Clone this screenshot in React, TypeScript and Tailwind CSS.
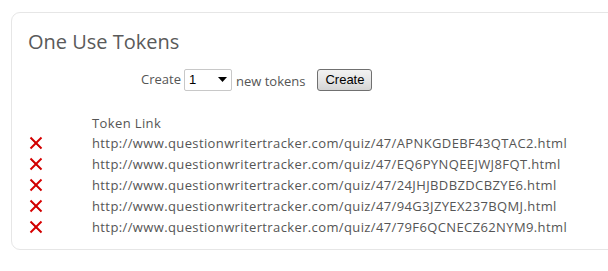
const tokens = [
    "APNKGDEBF43QTAC2",
    "EQ6PYNQEEJWJ8FQT",
    "24JHJBDBZDCBZYE6",
    "94G3JZYEX237BQMJ",
    "79F6QCNECZ62NYM9",
];

const DeleteIcon = () => (
    <svg width="14" height="14" viewBox="0 0 14 14" className="block">
        <path d="M1.5 1.5 L12.5 12.5" stroke="#d80000" strokeWidth="1.9" strokeLinecap="butt" />
        <path d="M12.5 1.5 L1.5 12.5" stroke="#d80000" strokeWidth="1.9" strokeLinecap="butt" />
        <path d="M2 2.6 L12 12.6" stroke="#9a0000" strokeWidth="0.5" />
    </svg>
);

const App = () => {
    return (
        <div className="w-[608px] h-[271px] bg-white pt-[12px] pl-[11px] overflow-hidden font-['Open_Sans',sans-serif] text-[#555]">
            <div className="w-[620px] h-[238px] border border-[#e6e6e6] rounded-[9px] pl-[16px] pt-[16px]">
                <h2 className="text-[20px] leading-[26px] text-[#5a5a5a]">One Use Tokens</h2>

                <div className="flex items-center mt-[13px] ml-[113px] text-[13px]">
                    <span>Create</span>
                    <div className="ml-[3px] w-[48px] h-[22px] border border-[#c8c8c8] rounded-[2px] flex items-center justify-between px-[4px] font-['Liberation_Sans',sans-serif] text-[13px] text-black">
                        <span>1</span>
                        <svg width="9" height="5" viewBox="0 0 9 5"><path d="M0 0 H9 L4.5 5 Z" fill="#000" /></svg>
                    </div>
                    <span className="ml-[4px] mt-[4px]">new tokens</span>
                    <button className="ml-[12px] w-[55px] h-[22px] border border-[#707070] rounded-[3px] bg-gradient-to-b from-[#f2f2f2] via-[#e6e6e6] to-[#d4d4d4] font-['Liberation_Sans',sans-serif] text-[13px] text-black leading-none">
                        Create
                    </button>
                </div>

                <div className="mt-[20px] text-[13px] tracking-[0.38px]">
                    <div className="pl-[64px] leading-[22px]">Token Link</div>
                    {tokens.map((t) => (
                        <div key={t} className="flex items-center h-[21px]">
                            <div className="w-[64px] pl-[1px] -mt-[3px]">
                                <DeleteIcon />
                            </div>
                            <span>http://www.questionwritertracker.com/quiz/47/{t}.html</span>
                        </div>
                    ))}
                </div>
            </div>
        </div>
    );
};

export default App;
